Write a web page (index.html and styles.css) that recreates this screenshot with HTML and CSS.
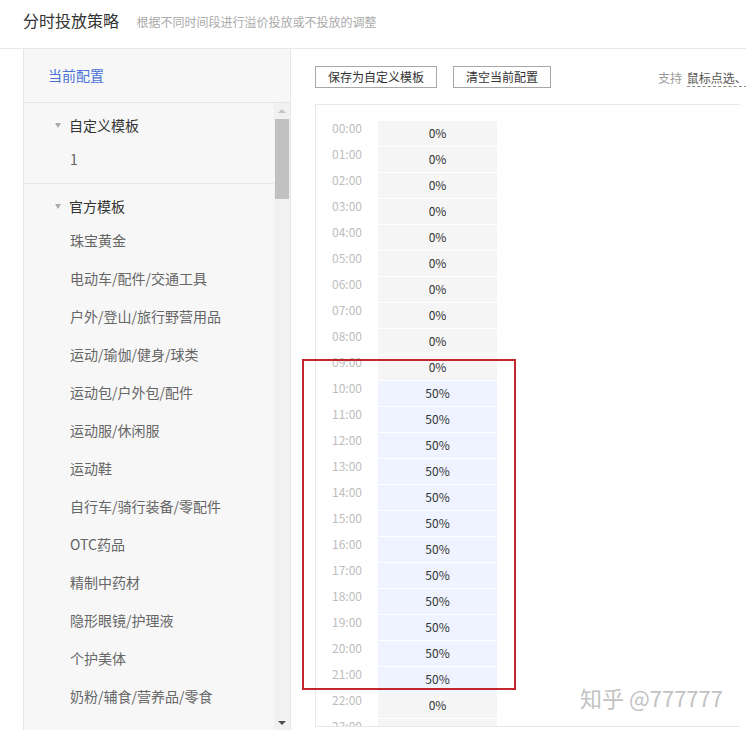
FILE: index.html
```html
<!DOCTYPE html>
<html lang="zh-CN">
<head>
    <meta charset="UTF-8">
    <title>分时投放策略</title>
    <link rel="stylesheet" href="styles.css">
</head>
<body>
    <div class="header">
        <span class="title">分时投放策略</span>
        <span class="subtitle">根据不同时间段进行溢价投放或不投放的调整</span>
    </div>

    <div class="main">
        <div class="side">
            <div class="side-head">当前配置</div>
            <div class="side-body">
                <div class="tree">
                    <div class="group">
                        <div class="group-title"><i class="caret"></i>自定义模板</div>
                        <div class="leaf">1</div>
                    </div>
                    <div class="group">
                        <div class="group-title"><i class="caret"></i>官方模板</div>
                        <div class="leaf">珠宝黄金</div>
                        <div class="leaf">电动车/配件/交通工具</div>
                        <div class="leaf">户外/登山/旅行野营用品</div>
                        <div class="leaf">运动/瑜伽/健身/球类</div>
                        <div class="leaf">运动包/户外包/配件</div>
                        <div class="leaf">运动服/休闲服</div>
                        <div class="leaf">运动鞋</div>
                        <div class="leaf">自行车/骑行装备/零配件</div>
                        <div class="leaf">OTC药品</div>
                        <div class="leaf">精制中药材</div>
                        <div class="leaf">隐形眼镜/护理液</div>
                        <div class="leaf">个护美体</div>
                        <div class="leaf">奶粉/辅食/营养品/零食</div>
                    </div>
                </div>
                <div class="scrollbar">
                    <i class="arrow-up"></i>
                    <div class="track"><div class="thumb"></div></div>
                    <i class="arrow-down"></i>
                </div>
            </div>
        </div>

        <div class="content">
            <div class="toolbar">
                <button class="btn">保存为自定义模板</button>
                <button class="btn">清空当前配置</button>
                <span class="tip">支持 <span class="tip-key">鼠标点选、</span></span>
            </div>

            <div class="grid-box">
                <div class="grid" id="grid"></div>
                <div class="mark"></div>
            </div>
        </div>
    </div>

    <div class="watermark">知乎 @777777</div>

    <script>
        const grid = document.getElementById('grid');
        const rates = [0, 0, 0, 0, 0, 0, 0, 0, 0, 0, 50, 50, 50, 50, 50, 50, 50, 50, 50, 50, 50, 50, 0, 0];

        rates.forEach((rate, hour) => {
            const row = document.createElement('div');
            row.className = 'row';
            const label = (hour < 10 ? '0' : '') + hour + ':00';
            row.innerHTML = '<span class="time">' + label + '</span>' +
                '<span class="cell' + (rate > 0 ? ' on' : '') + '">' + rate + '%</span>';
            grid.appendChild(row);
        });
    </script>
</body>
</html>
```

FILE: styles.css
```css
* {
    box-sizing: border-box;
}
html, body {
    margin: 0;
    height: 730px;
    overflow: hidden;
}
body {
    font-family: "Noto Sans CJK SC", "Liberation Sans", sans-serif;
    color: #333;
    background: #fff;
    position: relative;
}
.header {
    height: 49px;
    padding-left: 23px;
    border-bottom: 1px solid #e8e8e8;
    line-height: 40px;
    white-space: nowrap;
}
.title {
    font-size: 16px;
    color: #333;
}
.subtitle {
    font-size: 12px;
    color: #aaa;
    margin-left: 14px;
}
.main {
    display: flex;
    height: 681px;
}
.side {
    width: 268px;
    margin-left: 23px;
    border-left: 1px solid #e6e6e6;
    border-right: 1px solid #e6e6e6;
    background: #f7f7f7;
    display: flex;
    flex-direction: column;
    flex-shrink: 0;
}
.side-head {
    height: 54px;
    line-height: 52px;
    padding-left: 24px;
    font-size: 14px;
    color: #4a72d6;
    border-bottom: 1px solid #e6e6e6;
}
.side-body {
    flex: 1;
    display: flex;
    min-height: 0;
}
.tree {
    flex: 1;
    overflow: hidden;
}
.group {
    padding-bottom: 5px;
    border-bottom: 1px solid #e6e6e6;
}
.group:last-child {
    border-bottom: none;
}
.group-title {
    margin-top: 8px;
    line-height: 28px;
    padding-left: 31px;
    font-size: 14px;
    color: #333;
    display: flex;
    align-items: center;
}
.caret {
    width: 0;
    height: 0;
    border-left: 3px solid transparent;
    border-right: 3px solid transparent;
    border-top: 5px solid #aaa;
    margin-right: 8px;
}
.leaf {
    line-height: 38px;
    padding-left: 46px;
    font-size: 14px;
    color: #666;
    white-space: nowrap;
}
.group-title + .leaf {
    margin-top: 1px;
}
.scrollbar {
    width: 16px;
    background: #f1f1f1;
    display: flex;
    flex-direction: column;
    align-items: center;
}
.arrow-up, .arrow-down {
    width: 0;
    height: 0;
    border-left: 4px solid transparent;
    border-right: 4px solid transparent;
}
.arrow-up {
    border-bottom: 4px solid #c4c4c4;
    margin: 6px 0 6px;
}
.arrow-down {
    border-top: 4px solid #505050;
    margin: 5px 0 5px;
}
.track {
    flex: 1;
    width: 100%;
    padding: 0 1px;
}
.thumb {
    height: 80px;
    background: #c1c1c1;
}
.content {
    flex: 1;
    padding-left: 24px;
    min-width: 0;
}
.toolbar {
    display: flex;
    align-items: center;
    margin-top: 17px;
    height: 22px;
    white-space: nowrap;
}
.btn {
    height: 22px;
    padding: 0 12px;
    margin-right: 16px;
    font-family: inherit;
    font-size: 12px;
    color: #333;
    background: #fff;
    border: 1px solid #a8a8a8;
    border-radius: 0;
    line-height: 20px;
}
.tip {
    margin-left: 91px;
    font-size: 12px;
    color: #999;
}
.tip-key {
    color: #555;
    border-bottom: 1px dashed #888;
    margin-left: 2px;
}
.grid-box {
    position: relative;
    margin-top: 16px;
    margin-right: 6px;
    height: 623px;
    border-top: 1px solid #e8e8e8;
    border-left: 1px solid #e8e8e8;
    border-bottom: 1px solid #e8e8e8;
}
.grid {
    height: 100%;
    overflow: hidden;
    padding: 16px 0 0 16px;
}
.row {
    display: flex;
    height: 26px;
}
.time {
    width: 46px;
    font-size: 12px;
    line-height: 14px;
    color: #bdbdbd;
}
.cell {
    width: 119px;
    height: 26px;
    line-height: 24px;
    border-bottom: 1px solid #fff;
    background: #f5f5f5;
    text-align: center;
    font-size: 12px;
    color: #333;
}
.cell.on {
    background: #eef3ff;
}
.mark {
    position: absolute;
    left: -14px;
    top: 254px;
    width: 214px;
    height: 331px;
    border: 2px solid #c1272d;
}
.watermark {
    position: absolute;
    left: 580px;
    top: 682px;
    font-size: 22px;
    line-height: 30px;
    color: #c2c2c2;
    white-space: nowrap;
}
```
